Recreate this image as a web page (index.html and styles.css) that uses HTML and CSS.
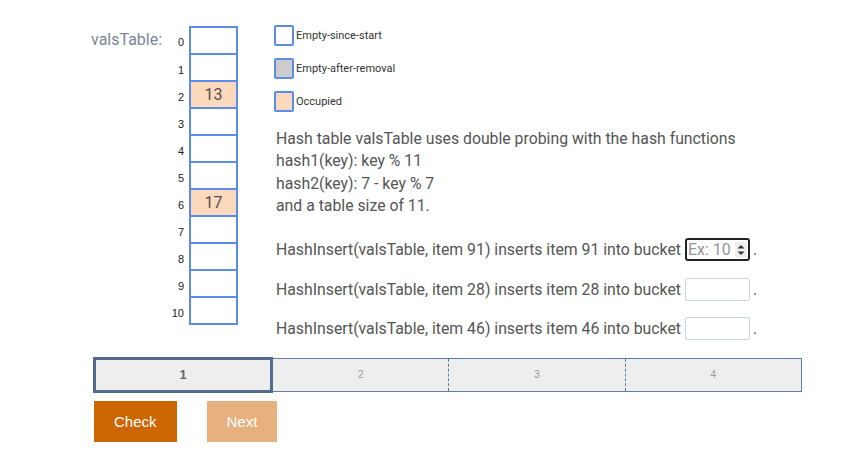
FILE: index.html
```html
<!DOCTYPE html>
<html lang="en">
<head>
  <meta charset="UTF-8">
  <title>Hash table double probing</title>
  <link rel="stylesheet" href="styles.css">
</head>
<body>
  <div class="activity">
    <div class="top">
      <div class="table-label">valsTable:</div>

      <div class="hash-table">
        <div class="row"><span class="idx">0</span><span class="cell"></span></div>
        <div class="row"><span class="idx">1</span><span class="cell"></span></div>
        <div class="row"><span class="idx">2</span><span class="cell occupied">13</span></div>
        <div class="row"><span class="idx">3</span><span class="cell"></span></div>
        <div class="row"><span class="idx">4</span><span class="cell"></span></div>
        <div class="row"><span class="idx">5</span><span class="cell"></span></div>
        <div class="row"><span class="idx">6</span><span class="cell occupied">17</span></div>
        <div class="row"><span class="idx">7</span><span class="cell"></span></div>
        <div class="row"><span class="idx">8</span><span class="cell"></span></div>
        <div class="row"><span class="idx">9</span><span class="cell"></span></div>
        <div class="row"><span class="idx">10</span><span class="cell"></span></div>
      </div>

      <div class="side">
        <div class="legend">
          <div class="legend-item"><span class="swatch"></span>Empty-since-start</div>
          <div class="legend-item"><span class="swatch removed"></span>Empty-after-removal</div>
          <div class="legend-item"><span class="swatch occupied"></span>Occupied</div>
        </div>

        <p class="desc">
          Hash table valsTable uses double probing with the hash functions<br>
          hash1(key): key % 11<br>
          hash2(key): 7 - key % 7<br>
          and a table size of 11.
        </p>

        <div class="questions">
          <div class="question">
            <span>HashInsert(valsTable, item 91) inserts item 91 into bucket</span>
            <span class="answer focused">
              <input type="text" placeholder="Ex: 10">
              <svg class="spinner" width="12" height="16" viewBox="0 0 12 16">
                <rect width="12" height="16" fill="#eceff1"/>
                <path d="M2.5 6.5 L6 3 L9.5 6.5 Z" fill="#333"/>
                <path d="M2.5 9.5 L6 13 L9.5 9.5 Z" fill="#333"/>
              </svg>
            </span>
            <span>.</span>
          </div>
          <div class="question">
            <span>HashInsert(valsTable, item 28) inserts item 28 into bucket</span>
            <span class="answer"><input type="text"></span>
            <span>.</span>
          </div>
          <div class="question">
            <span>HashInsert(valsTable, item 46) inserts item 46 into bucket</span>
            <span class="answer"><input type="text"></span>
            <span>.</span>
          </div>
        </div>
      </div>
    </div>

    <div class="progress">
      <div class="step active">1</div>
      <div class="step">2</div>
      <div class="step">3</div>
      <div class="step">4</div>
    </div>

    <div class="buttons">
      <button class="check">Check</button>
      <button class="next" disabled>Next</button>
    </div>
  </div>
</body>
</html>
```

FILE: styles.css
```css
body {
  margin: 0;
  font-family: Roboto, "Liberation Sans", sans-serif;
  background-color: white;
  color: #555;
}
.activity {
  padding: 25px 0 0 93px;
  width: 709px;
}
.top {
  display: flex;
}
.table-label {
  flex-shrink: 0;
  width: 78px;
  margin-left: -2px;
  margin-top: 5px;
  font-size: 16px;
  color: #7a8898;
}
.hash-table {
  flex-shrink: 0;
  display: flex;
  flex-direction: column;
  margin-top: 1px;
}
.row {
  display: flex;
  align-items: center;
}
.idx {
  width: 15px;
  padding-right: 5px;
  padding-top: 3px;
  text-align: right;
  font-family: "Liberation Sans", Arial, sans-serif;
  font-size: 11px;
  color: #222;
}
.cell {
  width: 45px;
  height: 25px;
  border: 2px solid #5b8de8;
  border-top: none;
  text-align: center;
  line-height: 25px;
  font-size: 16px;
  color: #5a4a55;
}
.row:first-child .cell {
  border-top: 2px solid #5b8de8;
}
.cell.occupied {
  background-color: #fcd9bd;
}
.side {
  margin-left: 36px;
  flex: 1;
}
.legend-item {
  display: flex;
  align-items: center;
  height: 21px;
  margin-bottom: 12px;
  font-size: 11px;
  color: #333;
}
.legend-item:last-child {
  margin-bottom: 0;
}
.swatch {
  width: 16px;
  height: 17px;
  border: 2px solid #5b8de8;
  border-radius: 2px;
  margin-right: 2px;
  background-color: white;
}
.swatch.removed {
  background-color: #ccc;
}
.swatch.occupied {
  background-color: #fcd9bd;
}
.desc {
  margin: 16px 0 0 2px;
  font-size: 15.8px;
  line-height: 22.3px;
  color: #555;
}
.questions {
  margin-top: 21px;
  margin-left: 2px;
}
.question {
  display: flex;
  align-items: center;
  height: 23px;
  margin-bottom: 16.5px;
  font-size: 15.8px;
  white-space: nowrap;
}
.answer {
  position: relative;
  display: inline-block;
  height: 23px;
  margin: 0 3px 0 4px;
}
.answer input {
  box-sizing: border-box;
  width: 65px;
  height: 23px;
  border: 1px solid #ccd4dc;
  border-radius: 2px;
  padding: 0 2px;
  font-family: Roboto, sans-serif;
  font-size: 16px;
  color: #333;
  outline: none;
}
.answer.focused input {
  border: 2px solid #222;
  border-radius: 3px;
  padding: 0 0 0 1px;
}
.answer input::placeholder {
  color: #8e979f;
}
.spinner {
  position: absolute;
  right: 3px;
  top: 3.5px;
}
.progress {
  display: flex;
  height: 32px;
  margin-top: 1px;
  border: 1px solid #5b7ea3;
  background-color: #eee;
}
.step {
  flex: 1;
  display: flex;
  align-items: center;
  justify-content: center;
  font-family: "Liberation Sans", Arial, sans-serif;
  font-size: 10px;
  color: #999;
  border-left: 1px dashed #5b7ea3;
}
.step:nth-child(2) {
  border-left: none;
}
.step.active {
  flex: 0 0 174px;
  margin: -2px 0 -2px -1px;
  border: 3px solid #536b8c;
  font-size: 13px;
  font-weight: bold;
  color: #666;
}
.buttons {
  display: flex;
  gap: 30px;
  margin-top: 9px;
  margin-left: 1px;
}
.buttons button {
  height: 41px;
  padding: 0 20px;
  border: none;
  font-family: "Liberation Sans", Arial, sans-serif;
  font-size: 15px;
  color: white;
  cursor: pointer;
}
.check {
  background-color: #cc6600;
}
.next {
  background-color: #e6b07f;
  padding: 0 21px 0 22px;
}
```
